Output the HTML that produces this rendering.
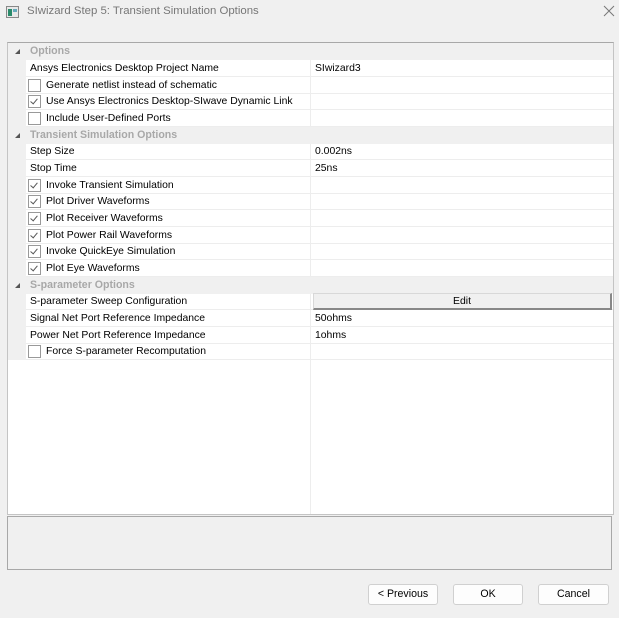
<!DOCTYPE html>
<html><head><style>
body{margin:0;width:619px;height:618px;background:#f0f0f0;font-family:"Liberation Sans",sans-serif;font-size:10.4px;color:#000;position:relative;overflow:hidden}
.a{position:absolute}
.title{left:27px;top:5px;font-size:11.4px;color:#777}
.grid{left:7px;top:42px;width:605px;height:471px;background:#fff;border:1px solid #c4c4c4;border-top:1px solid #a8a8a8}
.row{position:absolute;left:0;width:605px;height:16px;border-bottom:1px solid #ededed}
.cat{background:#f0f0f0;border-bottom:1px solid #f0f0f0}
.cat span{position:absolute;left:22px;top:2px;font-weight:bold;color:#a8a8a8;font-size:10.6px}
.cat i{position:absolute;left:7px;top:6px;width:0;height:0;border-left:5px solid transparent;border-bottom:5px solid #555}
.m{position:absolute;left:0;top:0;width:18px;height:17px;background:#f0f0f0}
.l{position:absolute;left:22px;top:3px}
.lc{position:absolute;left:38px;top:3px}
.cb{position:absolute;left:20px;top:2px;width:11px;height:11px;border:1px solid #999;background:#fff}
.cb.c::after{content:"";position:absolute;left:3px;top:1px;width:3px;height:6px;border:solid #555;border-width:0 1px 1px 0;transform:rotate(40deg)}
.v{position:absolute;left:307px;top:3px}
.d{position:absolute;left:302px;top:0;width:1px;background:#ededed;height:471px}
.btn{position:absolute;top:584px;height:19px;background:#fdfdfd;border:1px solid #d0d0d0;border-radius:3px;text-align:center;line-height:19px;font-size:10.6px}
</style></head><body>
<svg class="a" style="left:6px;top:6px" width="13" height="12"><rect x="0.5" y="0.5" width="12" height="11" fill="#e8e8e8" stroke="#888"/><rect x="2" y="3" width="4" height="7" fill="#2a8a6a"/><rect x="7" y="3" width="4" height="3" fill="#6ab"/></svg>
<div class="a title">SIwizard Step 5: Transient Simulation Options</div>
<svg class="a" style="left:603px;top:5px" width="12" height="12"><path d="M1 1L11 11M11 1L1 11" stroke="#777" stroke-width="1"/></svg>
<div class="a grid">
<div class="d"></div>
<div class="row cat" style="top:0"><i></i><span>Options</span></div>
<div class="row" style="top:17px"><div class="m"></div><span class="l">Ansys Electronics Desktop Project Name</span><span class="v">SIwizard3</span></div>
<div class="row" style="top:34px"><div class="m"></div><div class="cb"></div><span class="lc">Generate netlist instead of schematic</span></div>
<div class="row" style="top:50px"><div class="m"></div><div class="cb c"></div><span class="lc">Use Ansys Electronics Desktop-SIwave Dynamic Link</span></div>
<div class="row" style="top:67px"><div class="m"></div><div class="cb"></div><span class="lc">Include User-Defined Ports</span></div>
<div class="row cat" style="top:84px"><i></i><span>Transient Simulation Options</span></div>
<div class="row" style="top:100px"><div class="m"></div><span class="l">Step Size</span><span class="v">0.002ns</span></div>
<div class="row" style="top:117px"><div class="m"></div><span class="l">Stop Time</span><span class="v">25ns</span></div>
<div class="row" style="top:134px"><div class="m"></div><div class="cb c"></div><span class="lc">Invoke Transient Simulation</span></div>
<div class="row" style="top:150px"><div class="m"></div><div class="cb c"></div><span class="lc">Plot Driver Waveforms</span></div>
<div class="row" style="top:167px"><div class="m"></div><div class="cb c"></div><span class="lc">Plot Receiver Waveforms</span></div>
<div class="row" style="top:184px"><div class="m"></div><div class="cb c"></div><span class="lc">Plot Power Rail Waveforms</span></div>
<div class="row" style="top:200px"><div class="m"></div><div class="cb c"></div><span class="lc">Invoke QuickEye Simulation</span></div>
<div class="row" style="top:217px"><div class="m"></div><div class="cb c"></div><span class="lc">Plot Eye Waveforms</span></div>
<div class="row cat" style="top:234px"><i></i><span>S-parameter Options</span></div>
<div class="row" style="top:250px"><div class="m"></div><span class="l">S-parameter Sweep Configuration</span><div style="position:absolute;left:305px;top:0;width:296px;height:14px;background:#f0f0f0;border:1px solid #d8d8d8;border-right:2px solid #888;border-bottom:2px solid #888;text-align:center;line-height:15px">Edit</div></div>
<div class="row" style="top:267px"><div class="m"></div><span class="l">Signal Net Port Reference Impedance</span><span class="v">50ohms</span></div>
<div class="row" style="top:284px"><div class="m"></div><span class="l">Power Net Port Reference Impedance</span><span class="v">1ohms</span></div>
<div class="row" style="top:300px"><div class="m"></div><div class="cb"></div><span class="lc">Force S-parameter Recomputation</span></div>
</div>
<div class="a" style="left:7px;top:516px;width:603px;height:52px;border:1px solid #a8a8a8;background:#f0f0f0"></div>
<div class="btn" style="left:368px;width:68px">&lt; Previous</div>
<div class="btn" style="left:453px;width:68px">OK</div>
<div class="btn" style="left:538px;width:69px">Cancel</div>
</body></html>
